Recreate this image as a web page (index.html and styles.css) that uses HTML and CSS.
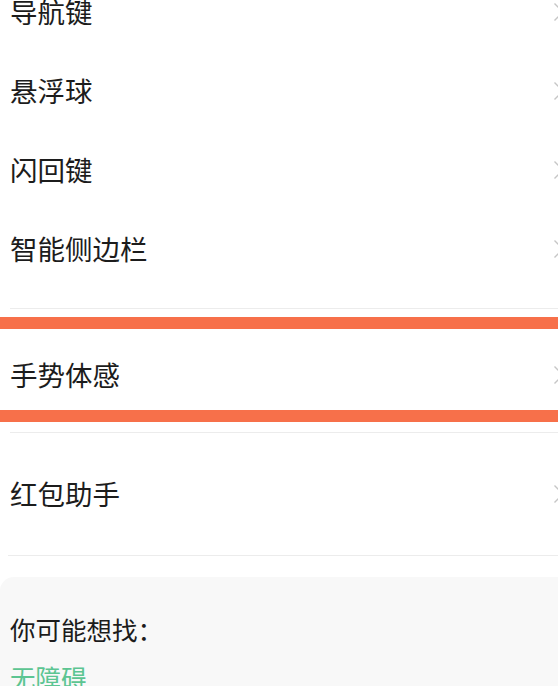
FILE: index.html
```html
<!DOCTYPE html>
<html lang="zh">
<head>
<meta charset="utf-8">
<link rel="stylesheet" href="styles.css">
</head>
<body>
<div class="page">
  <div class="list">
    <div class="row"><span class="label">导航键</span><svg class="chev" viewBox="0 0 12 20"><path d="M1.5 1.5 L10 10 L1.5 18.5"/></svg></div>
    <div class="row"><span class="label">悬浮球</span><svg class="chev" viewBox="0 0 12 20"><path d="M1.5 1.5 L10 10 L1.5 18.5"/></svg></div>
    <div class="row"><span class="label">闪回键</span><svg class="chev" viewBox="0 0 12 20"><path d="M1.5 1.5 L10 10 L1.5 18.5"/></svg></div>
    <div class="row"><span class="label">智能侧边栏</span><svg class="chev" viewBox="0 0 12 20"><path d="M1.5 1.5 L10 10 L1.5 18.5"/></svg></div>
  </div>
  <div class="divider first"></div>
  <div class="highlight">
    <div class="row inner"><span class="label">手势体感</span><svg class="chev" viewBox="0 0 12 20"><path d="M1.5 1.5 L10 10 L1.5 18.5"/></svg></div>
  </div>
  <div class="divider second"></div>
  <div class="row tall"><span class="label">红包助手</span><svg class="chev" viewBox="0 0 12 20"><path d="M1.5 1.5 L10 10 L1.5 18.5"/></svg></div>
  <div class="divider third"></div>
  <div class="suggest">
    <div class="suggest-title">你可能想找：</div>
    <div class="suggest-link">无障碍</div>
  </div>
</div>
</body>
</html>
```
FILE: styles.css
```css
html, body {
  margin: 0;
  padding: 0;
  background: #ffffff;
  overflow: hidden;
}
.page {
  width: 558px;
  height: 686px;
  overflow: hidden;
  font-family: "Noto Sans CJK SC", "Noto Sans", sans-serif;
  color: #1c1c1c;
}
.list {
  margin-top: -28px;
}
.row {
  display: flex;
  align-items: center;
  justify-content: space-between;
  height: 79px;
  padding-left: 10px;
  margin-right: -7px;
}
.label {
  font-size: 27.5px;
  line-height: 1;
}
.chev {
  width: 12px;
  height: 20px;
  flex: none;
}
.chev path {
  fill: none;
  stroke: #c6c6c6;
  stroke-width: 1.4;
}
.divider {
  height: 1px;
  background: #ececec;
  margin-left: 10px;
}
.divider.first {
  margin-top: 20px;
}
.highlight {
  margin-top: 8px;
  border-top: 12px solid #f7704a;
  border-bottom: 12px solid #f7704a;
  padding-top: 10px;
}
.row.inner {
  height: 71px;
}
.divider.second {
  margin-top: 10px;
}
.row.tall {
  height: 122px;
}
.divider.third {
  margin-left: 8px;
}
.suggest {
  margin-top: 21px;
  background: #f8f8f8;
  border-radius: 14px 0 0 0;
  padding: 39px 10px 0;
  height: 200px;
}
.suggest-title {
  font-size: 25.5px;
  line-height: 26px;
}
.suggest-link {
  margin-top: 22px;
  font-size: 25.5px;
  line-height: 26px;
  color: #5cc592;
}
```
